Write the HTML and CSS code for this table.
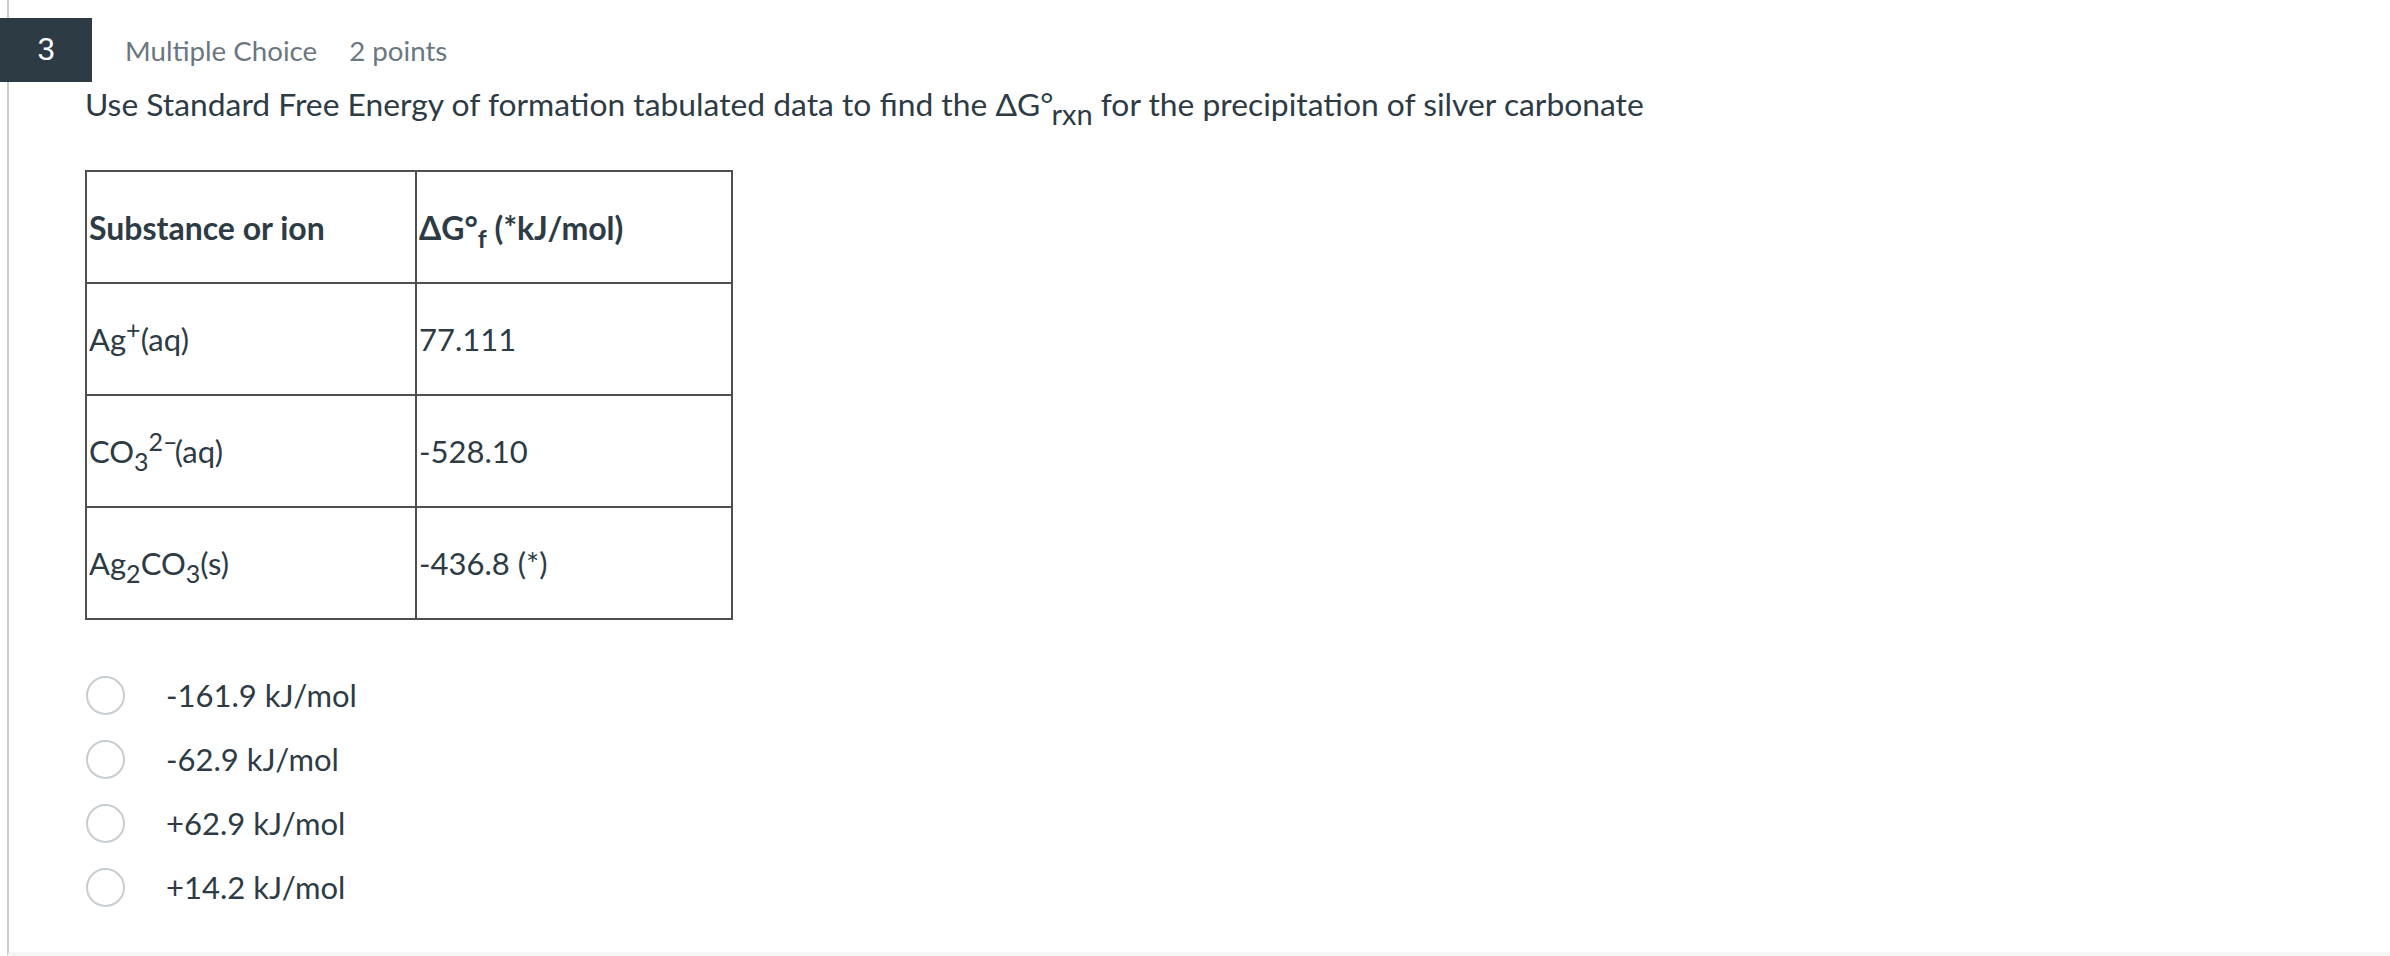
FILE: index.html
```html
<!DOCTYPE html>
<html>
<head>
<meta charset="utf-8">
<link rel="stylesheet" href="styles.css">
</head>
<body>
<div class="question">
  <div class="badge">3</div>
  <div class="q-header">
    <span class="q-type">Multiple Choice</span>
    <span class="q-points">2 points</span>
  </div>
  <div class="q-text">Use Standard Free Energy of formation tabulated data to find the ΔG°<sub>rxn</sub> for the precipitation of silver carbonate</div>
  <table class="data">
    <tr>
      <td class="c1 th">Substance or ion</td>
      <td class="c2 th">ΔG°<sub>f</sub> (*kJ/mol)</td>
    </tr>
    <tr>
      <td class="c1">Ag<sup>+</sup>(aq)</td>
      <td class="c2">77.111</td>
    </tr>
    <tr>
      <td class="c1">CO<sub>3</sub><sup class="tight">2–</sup>(aq)</td>
      <td class="c2">-528.10</td>
    </tr>
    <tr>
      <td class="c1">Ag<sub>2</sub>CO<sub>3</sub>(s)</td>
      <td class="c2">-436.8 (*)</td>
    </tr>
  </table>
  <div class="options">
    <div class="option"><span class="radio"></span><span class="label">-161.9 kJ/mol</span></div>
    <div class="option"><span class="radio"></span><span class="label">-62.9 kJ/mol</span></div>
    <div class="option"><span class="radio"></span><span class="label">+62.9 kJ/mol</span></div>
    <div class="option"><span class="radio"></span><span class="label">+14.2 kJ/mol</span></div>
  </div>
</div>
</body>
</html>
```

FILE: styles.css
```css
html, body {
  margin: 0;
  padding: 0;
  background: #ffffff;
}
body {
  font-family: Lato, "Open Sans", sans-serif;
  color: #2d3b45;
}
.question {
  position: relative;
  box-sizing: border-box;
  margin-left: 7px;
  height: 956px;
  border-left: 2px solid #c7cdd1;
  border-bottom: 4px solid #f5f5f5;
  padding-left: 76px;
  padding-top: 18px;
}
.badge {
  position: absolute;
  left: -9px;
  top: 18px;
  width: 92px;
  height: 64px;
  background: #2d3b45;
  color: #ffffff;
  font-family: "Liberation Sans", Arial, sans-serif;
  font-size: 31px;
  display: flex;
  align-items: center;
  justify-content: center;
}
.q-header {
  height: 64px;
  display: flex;
  align-items: center;
  gap: 32px;
  padding-left: 40px;
  font-size: 27.7px;
  color: #6b7780;
}
.q-text {
  margin-top: 3px;
  font-size: 31.8px;
  line-height: 38px;
}
.q-text sub {
  font-size: 29px;
  line-height: 0;
  vertical-align: -9px;
  margin-left: -2px;
}
.data {
  margin-top: 47px;
  border-collapse: collapse;
  font-size: 31px;
}
.data td {
  border: 2px solid #4f4f4f;
  height: 112px;
  padding: 0 2px;
  vertical-align: middle;
  text-align: left;
  box-sizing: border-box;
}
.data .c1 {
  width: 330px;
}
.data .c2 {
  width: 316px;
}
.data .th {
  font-weight: bold;
  font-size: 32px;
}
.data sub, .data sup {
  font-size: 25px;
  line-height: 0;
}
.data sub {
  vertical-align: -8px;
}
.data sup {
  vertical-align: 12px;
}
.data sup.tight {
  margin-right: -3px;
}
.options {
  margin-top: 43px;
  display: flex;
  flex-direction: column;
}
.option {
  height: 64px;
  display: flex;
  align-items: center;
  font-size: 31px;
}
.radio {
  box-sizing: border-box;
  width: 39px;
  height: 39px;
  border: 2px solid #c7cdd1;
  border-radius: 50%;
  margin-left: 1px;
  margin-right: 41px;
}
```
